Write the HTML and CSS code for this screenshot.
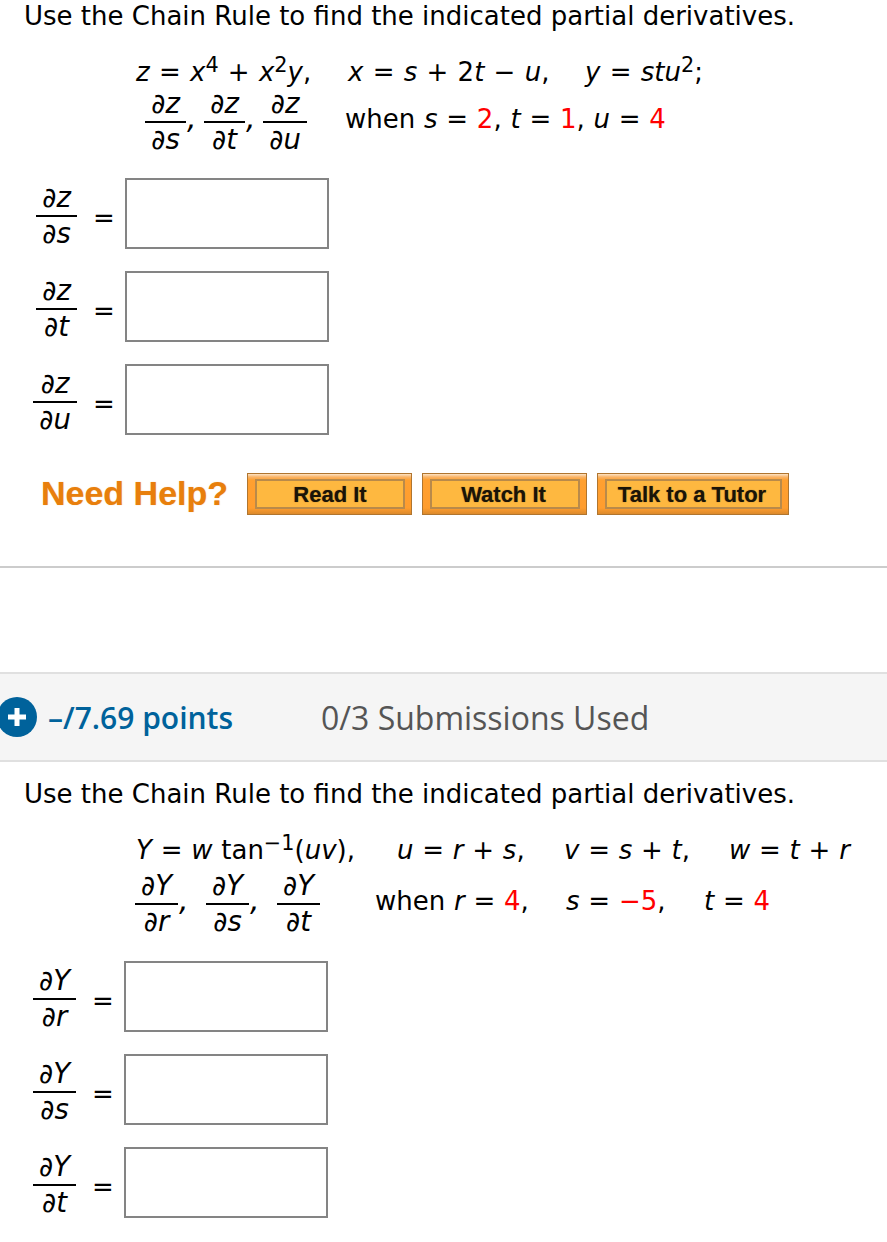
FILE: index.html
```html
<!DOCTYPE html>
<html lang="en">
<head>
    <meta charset="UTF-8">
    <meta name="viewport" content="width=device-width, initial-scale=1.0">
    <title>Chain Rule Questions</title>
    <link rel="stylesheet" href="styles.css">
</head>
<body>
    <!-- First question -->
    <section class="question question-one">
        <p class="prompt">Use the Chain Rule to find the indicated partial derivatives.</p>

        <div class="formula">
            <div class="formula-row eq-one">
                <span class="eq-z"><i>z</i> = <i>x</i><sup>4</sup> + <i>x</i><sup>2</sup><i>y</i>,</span>
                <span class="eq-x"><i>x</i> = <i>s</i> + 2<i>t</i> &minus; <i>u</i>,</span>
                <span><i>y</i> = <i>stu</i><sup>2</sup>;</span>
            </div>
            <div class="formula-row when-one">
                <div class="frac-list">
                    <span class="frac"><span class="num">&part;<i>z</i></span><span class="den">&part;<i>s</i></span></span><i class="comma">,</i>
                    <span class="frac"><span class="num">&part;<i>z</i></span><span class="den">&part;<i>t</i></span></span><i class="comma">,</i>
                    <span class="frac frac-u"><span class="num">&part;<i>z</i></span><span class="den">&part;<i>u</i></span></span>
                </div>
                <span class="when">when <i>s</i> = <b>2</b>, <i>t</i> = <b>1</b>, <i>u</i> = <b>4</b></span>
            </div>
        </div>

        <div class="answers">
            <div class="answer">
                <span class="frac"><span class="num">&part;<i>z</i></span><span class="den">&part;<i>s</i></span></span>
                <span class="equals">=</span>
                <input class="answer-box" type="text">
            </div>
            <div class="answer">
                <span class="frac"><span class="num">&part;<i>z</i></span><span class="den">&part;<i>t</i></span></span>
                <span class="equals">=</span>
                <input class="answer-box" type="text">
            </div>
            <div class="answer">
                <span class="frac frac-u"><span class="num">&part;<i>z</i></span><span class="den">&part;<i>u</i></span></span>
                <span class="equals">=</span>
                <input class="answer-box" type="text">
            </div>
        </div>

        <div class="help">
            <span class="help-label">Need Help?</span>
            <button class="help-btn btn-read" type="button"><span>Read It</span></button>
            <button class="help-btn btn-watch" type="button"><span>Watch It</span></button>
            <button class="help-btn btn-tutor" type="button"><span>Talk to a Tutor</span></button>
        </div>
    </section>

    <!-- Points bar -->
    <div class="points-bar">
        <svg class="plus-icon" width="37" height="40" viewBox="0 0 37 40">
            <circle cx="17" cy="20" r="20" fill="#00629b"/>
            <path d="M17 11v18M8 20h18" stroke="#fff" stroke-width="5"/>
        </svg>
        <span class="points">&ndash;/7.69 points</span>
        <span class="submissions">0/3 Submissions Used</span>
    </div>

    <!-- Second question -->
    <section class="question question-two">
        <p class="prompt">Use the Chain Rule to find the indicated partial derivatives.</p>

        <div class="formula">
            <div class="formula-row eq-two">
                <span class="eq-y"><i>Y</i> = <i>w</i> tan<sup>&minus;1</sup>(<i>uv</i>),</span>
                <span class="eq-u"><i>u</i> = <i>r</i> + <i>s</i>,</span>
                <span class="eq-v"><i>v</i> = <i>s</i> + <i>t</i>,</span>
                <span><i>w</i> = <i>t</i> + <i>r</i></span>
            </div>
            <div class="formula-row when-two">
                <div class="frac-list wide">
                    <span class="frac"><span class="num">&part;<i>Y</i></span><span class="den">&part;<i>r</i></span></span><i class="comma">,</i>
                    <span class="frac"><span class="num">&part;<i>Y</i></span><span class="den">&part;<i>s</i></span></span><i class="comma">,</i>
                    <span class="frac"><span class="num">&part;<i>Y</i></span><span class="den">&part;<i>t</i></span></span>
                </div>
                <span class="when-r">when <i>r</i> = <b>4</b>,</span>
                <span class="when-s"><i>s</i> = <b>&minus;5</b>,</span>
                <span class="when-t"><i>t</i> = <b>4</b></span>
            </div>
        </div>

        <div class="answers">
            <div class="answer">
                <span class="frac"><span class="num">&part;<i>Y</i></span><span class="den">&part;<i>r</i></span></span>
                <span class="equals">=</span>
                <input class="answer-box" type="text">
            </div>
            <div class="answer">
                <span class="frac"><span class="num">&part;<i>Y</i></span><span class="den">&part;<i>s</i></span></span>
                <span class="equals">=</span>
                <input class="answer-box" type="text">
            </div>
            <div class="answer">
                <span class="frac"><span class="num">&part;<i>Y</i></span><span class="den">&part;<i>t</i></span></span>
                <span class="equals">=</span>
                <input class="answer-box" type="text">
            </div>
        </div>
    </section>
</body>
</html>
```

FILE: styles.css
```css
/* Basic Styling */
body {
    margin: 0;
    padding: 0;
    background-color: #fff;
    color: #000;
    font-family: "DejaVu Sans", Verdana, sans-serif;
    font-size: 26px;
    overflow-x: hidden;
}

.question-one {
    height: 566px;
    border-bottom: 2px solid #ccc;
}

.question-two {
    height: 480px;
}

.prompt {
    margin: 0;
    padding: 0 0 0 24px;
    height: 32px;
    line-height: 32px;
    white-space: nowrap;
}

.question-two .prompt {
    padding-top: 16px;
}

/* Formula block */
.formula {
    padding-left: 136px;
}

.formula-row {
    display: flex;
    align-items: center;
    white-space: nowrap;
    word-spacing: 1px;
}

.eq-one,
.eq-two {
    height: 40px;
    margin-top: 20px;
}

.eq-two,
.when-two {
    word-spacing: 0.5px;
}

.when-one {
    margin-top: -6px;
    word-spacing: 0.5px;
}

.eq-z {
    width: 212px;
}

.eq-x {
    width: 237px;
}

.eq-y {
    width: 261px;
}

.eq-u {
    width: 167px;
}

.eq-v {
    width: 165px;
}

sup {
    font-size: 0.8em;
    line-height: 0;
    vertical-align: 0.42em;
}

.when-two {
    margin-top: -2px;
}

.when {
    padding-bottom: 6px;
}

.when-r,
.when-s,
.when-t {
    padding-bottom: 6px;
}

.frac-list {
    display: flex;
    align-items: center;
    width: 200px;
    margin-left: 9px;
}

.frac-list.wide {
    width: 240px;
    margin-left: -1px;
}

.frac-list .comma {
    width: 18px;
    padding-bottom: 10px;
    padding-left: 1px;
    box-sizing: border-box;
    font-size: 30px;
}

.frac-list.wide .comma {
    width: 28px;
}

.when-r {
    width: 191px;
}

.when-s {
    width: 138px;
}

b {
    color: #f00;
    font-weight: normal;
}

/* Fractions */
.frac {
    display: inline-flex;
    flex-direction: column;
    align-items: center;
    flex: none;
    width: 41px;
    font-size: 27.5px;
    line-height: 35px;
}

.frac-u {
    width: 44px;
}

.question-two .frac {
    width: 43px;
}

.num {
    width: 100%;
    text-align: center;
    border-bottom: 2px solid #000;
    height: 35px;
}

.den {
    height: 35px;
    line-height: 33px;
}

/* Answer rows */
.answers {
    display: flex;
    flex-direction: column;
    gap: 23px;
    margin-top: 20px;
    padding-left: 36px;
}

.question-two .answers {
    margin-top: 21px;
    padding-left: 33px;
}

.answer {
    display: flex;
    align-items: center;
    height: 70px;
}

.answer .frac {
    margin-top: 6px;
}

.answer .frac-u {
    margin-left: -3px;
}

.equals {
    width: 48px;
    margin-top: 10px;
    padding-left: 16px;
    box-sizing: border-box;
}

.answer-box {
    width: 204px;
    height: 71px;
    box-sizing: border-box;
    border: 2px solid #848484;
    background-color: #fff;
    margin: 0;
    padding: 0;
}

/* Help buttons */
.help {
    display: flex;
    align-items: center;
    margin-top: 39px;
    padding-left: 41px;
}

.help-label {
    width: 206px;
    padding-bottom: 2px;
    color: #e87f0c;
    font-family: "Liberation Sans", Arial, sans-serif;
    font-size: 34px;
    font-weight: bold;
    white-space: nowrap;
    text-shadow: 0 0 1px rgba(232, 127, 12, 0.5);
}

.help-btn {
    height: 42px;
    margin: 0 10px 0 0;
    padding: 5px 6px 5px 7px;
    border: 1px solid #b0752f;
    background: linear-gradient(#fde3c4 0, #f9b468 3px, #ffa030 6px, #ff9d2e 85%, #dc8a2c 100%);
    box-sizing: border-box;
}

.help-btn span {
    display: block;
    height: 100%;
    box-sizing: border-box;
    border: 2px solid #b98a4a;
    background-color: #feb840;
    color: #1a1408;
    font-family: "Liberation Sans", Arial, sans-serif;
    font-size: 22px;
    font-weight: bold;
    line-height: 27px;
    text-align: center;
    text-shadow: 0 0 1px rgba(26, 20, 8, 0.6);
}

.btn-read,
.btn-watch {
    width: 165px;
}

.btn-watch span,
.btn-tutor span {
    text-indent: -3px;
}

.btn-tutor {
    width: 192px;
}

/* Points bar */
.points-bar {
    display: flex;
    align-items: center;
    height: 86px;
    margin-top: 104px;
    border-top: 2px solid #e0e0e0;
    border-bottom: 2px solid #e0e0e0;
    background-color: #f5f5f5;
    font-family: "Open Sans", sans-serif;
    white-space: nowrap;
}

.plus-icon {
    flex: none;
    margin-right: 11px;
}

.points {
    width: 273px;
    color: #00629b;
    font-size: 30px;
    font-weight: 600;
}

.submissions {
    color: #555;
    font-size: 32px;
}
```
